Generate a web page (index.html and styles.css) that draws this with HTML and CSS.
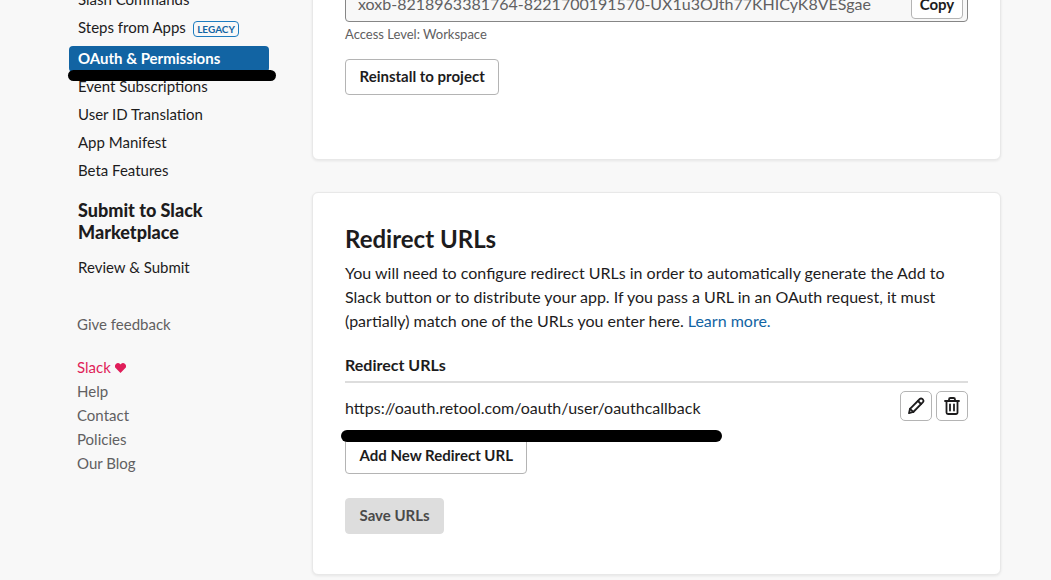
FILE: index.html
```html
<!DOCTYPE html>
<html lang="en">
<head>
  <meta charset="UTF-8">
  <meta name="viewport" content="width=device-width, initial-scale=1.0">
  <title>OAuth &amp; Permissions</title>
  <link rel="stylesheet" href="styles.css">
</head>
<body>
  <div class="page">
    <nav class="sidebar">
      <ul class="nav-list">
        <li><a class="nav-item">Slash Commands</a></li>
        <li><a class="nav-item">Steps from Apps <span class="legacy">LEGACY</span></a></li>
        <li><a class="nav-item active">OAuth &amp; Permissions</a></li>
        <li><a class="nav-item">Event Subscriptions</a></li>
        <li><a class="nav-item">User ID Translation</a></li>
        <li><a class="nav-item">App Manifest</a></li>
        <li><a class="nav-item">Beta Features</a></li>
      </ul>
      <h3 class="nav-heading">Submit to Slack Marketplace</h3>
      <a class="nav-item">Review &amp; Submit</a>
      <a class="feedback">Give feedback</a>
      <ul class="footer-links">
        <li class="slack">Slack
          <svg class="heart" width="11" height="10" viewBox="0 0 11 10"><path d="M5.500 10L.9 5.300A2.900 2.900 0 0 1 5.100 1.100l.4.5.4-.5a2.900 2.900 0 0 1 4.200 4.200z"/></svg>
        </li>
        <li>Help</li>
        <li>Contact</li>
        <li>Policies</li>
        <li>Our Blog</li>
      </ul>
    </nav>

    <main class="content">
      <section class="card card-token">
        <div class="token-box">
          <span class="token">xoxb-8218963381764-8221700191570-UX1u3OJth77KHICyK8VESgae</span>
          <button class="btn btn-copy">Copy</button>
        </div>
        <p class="access">Access Level: Workspace</p>
        <button class="btn">Reinstall to project</button>
      </section>

      <section class="card card-redirect">
        <h2>Redirect URLs</h2>
        <p class="intro">You will need to configure redirect URLs in order to automatically generate the Add to Slack button or to distribute your app. If you pass a URL in an OAuth request, it must (partially) match one of the URLs you enter here. <a class="link">Learn more.</a></p>
        <h4 class="table-title">Redirect URLs</h4>
        <div class="url-row">
          <span class="url">https://oauth.retool.com/oauth/user/oauthcallback</span>
          <div class="url-actions">
            <button class="icon-btn" aria-label="Edit">
              <svg width="20" height="20" viewBox="0 0 20 20" fill="none" stroke="#1d1c1d" stroke-width="1.8" stroke-linejoin="round" stroke-linecap="round">
                <path d="M3 17.2l1-4.4L13.8 3a1.8 1.8 0 0 1 2.5 0l.7.7a1.8 1.8 0 0 1 0 2.5L7.300 16z"/>
                <path d="M12 5l3 3"/>
                <path d="M4 12.800l3.300 3.200"/>
              </svg>
            </button>
            <button class="icon-btn" aria-label="Delete">
              <svg width="20" height="20" viewBox="0 0 20 20" fill="none" stroke="#1d1c1d" stroke-width="1.8" stroke-linejoin="round" stroke-linecap="round">
                <path d="M3 5h14"/>
                <path d="M7 5V3.500a1.500 1.500 0 0 1 1.500-1.500h3A1.500 1.500 0 0 1 13 3.500V5"/>
                <path d="M4.500 5v11.500A1.500 1.500 0 0 0 6 18h8a1.500 1.500 0 0 0 1.500-1.500V5"/>
                <path d="M8 8.500v6"/>
                <path d="M12 8.500v6"/>
              </svg>
            </button>
          </div>
        </div>
        <button class="btn btn-add">Add New Redirect URL</button>
        <button class="btn btn-disabled">Save URLs</button>
      </section>
    </main>
  </div>

  <!-- black marker strokes over the screenshot -->
  <div class="scribble scribble-nav"></div>
  <div class="scribble scribble-url"></div>
</body>
</html>
```
FILE: styles.css
```css
* {
  box-sizing: border-box;
}
html, body {
  height: 580px;
  overflow: hidden;
}
body {
  margin: 0;
  background: #f8f8f8;
  color: #1d1c1d;
  font-family: Lato, "Liberation Sans", sans-serif;
  font-size: 16px;
  line-height: 24px;
}
.page {
  display: flex;
  align-items: flex-start;
  padding-left: 69px;
}

/* sidebar */
.sidebar {
  width: 200px;
  margin-top: -15px;
  flex-shrink: 0;
  font-size: 15px;
}
.nav-list, .footer-links {
  list-style: none;
  margin: 0;
  padding: 0;
}
.nav-item {
  display: block;
  height: 28px;
  padding: 0 9px;
  line-height: 28px;
}
.nav-item.active {
  height: 26px;
  margin: 5px 0 0;
  background: #1264a3;
  color: #fff;
  font-weight: 700;
  line-height: 24px;
  border-radius: 4px;
}
.legacy {
  display: inline-block;
  margin-left: 3px;
  padding: 0 3.500px;
  border: 1px solid #1d7cc0;
  border-radius: 4px;
  color: #1264a3;
  font-size: 10px;
  font-weight: 700;
  line-height: 14px;
  vertical-align: 0;
}
.nav-heading {
  margin: 15px 0 10px;
  padding: 0 9px;
  font-size: 18px;
  font-weight: 900;
  line-height: 22px;
}
.feedback {
  display: block;
  margin-top: 29px;
  padding-left: 8px;
  color: #616061;
  line-height: 28px;
}
.footer-links {
  margin-top: 17px;
  padding-left: 8px;
  color: #616061;
}
.slack {
  height: 24px;
  color: #e01e5a;
}
.heart {
  fill: #e01e5a;
}

/* cards */
.content {
  width: 689px;
  margin-left: 43px;
  margin-top: -64px;
  display: flex;
  flex-direction: column;
  gap: 32px;
}
.card {
  padding: 32px;
  background: #fff;
  border: 1px solid #e8e8e8;
  border-radius: 6px;
  box-shadow: 0 1px 3px rgba(0, 0, 0, 0.08);
}
.card-token {
  height: 224px;
  padding-top: 49px;
}
.card-redirect {
  height: 383px;
}
.token-box {
  display: flex;
  align-items: center;
  justify-content: space-between;
  height: 36px;
  padding: 0 4px 0 12px;
  background: #f8f8f8;
  border: 1px solid #868686;
  border-radius: 4px;
}
.token {
  color: #616061;
}
.access {
  margin: 2px 0 15px;
  color: #616061;
  font-size: 13px;
  line-height: 20px;
}
.btn {
  display: block;
  height: 36px;
  padding: 0 13.500px 2px;
  background: #fff;
  border: 1px solid #b4b4b4;
  border-radius: 4px;
  color: #1d1c1d;
  font-family: inherit;
  font-size: 15px;
  font-weight: 700;
}
.btn-copy {
  height: 30px;
  width: 52px;
  padding: 0;
}
.btn-add {
  margin-top: 9px;
}
.btn-disabled {
  margin-top: 24px;
  background: #ddd;
  border-color: #ddd;
  color: #4a4a4a;
}

/* redirect urls */
h2 {
  margin: -1px 0 7px;
  font-size: 24px;
  font-weight: 700;
  line-height: 30px;
}
.intro {
  margin: 0;
}
.link {
  color: #1264a3;
}
.table-title {
  margin: 20px 0 4px;
  padding-bottom: 4px;
  border-bottom: 2px solid #ddd;
  font-size: 16px;
  font-weight: 700;
  line-height: 24px;
}
.url-row {
  display: flex;
  justify-content: space-between;
  align-items: flex-start;
  padding-top: 4px;
  height: 42px;
}
.url {
  padding-top: 4px;
  line-height: 26px;
}
.url-actions {
  display: flex;
  gap: 4px;
}
.icon-btn {
  display: flex;
  align-items: center;
  justify-content: center;
  width: 32px;
  height: 30px;
  padding: 0;
  background: #fff;
  border: 1px solid #b4b4b4;
  border-radius: 5px;
}

/* marker strokes, lying over the page */
.scribble {
  position: absolute;
  height: 11px;
  background: #000;
  border-radius: 6px;
}
.scribble-nav {
  left: 68px;
  top: 70px;
  width: 208px;
}
.scribble-url {
  left: 341px;
  top: 430px;
  height: 12px;
  width: 381px;
}
```
